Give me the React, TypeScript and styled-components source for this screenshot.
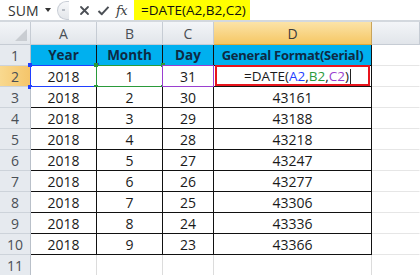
import styled, { createGlobalStyle } from 'styled-components'

const GlobalStyle = createGlobalStyle`
  html, body {
    margin: 0;
    padding: 0;
    background: #ffffff;
    overflow: hidden;
  }
  body {
    font-family: "Open Sans", "Liberation Sans", sans-serif;
  }
`;

type RefColor = 'blue' | 'green' | 'purple' | 'red';

const refColors: Record<RefColor, string> = {
  blue: '#1f3fff',
  green: '#2a9a3a',
  purple: '#9a3fd0',
  red: '#e8141c',
};

const rows = [
  { year: '2018', month: '1', day: '31', serial: '' },
  { year: '2018', month: '2', day: '30', serial: '43161' },
  { year: '2018', month: '3', day: '29', serial: '43188' },
  { year: '2018', month: '4', day: '28', serial: '43218' },
  { year: '2018', month: '5', day: '27', serial: '43247' },
  { year: '2018', month: '6', day: '26', serial: '43277' },
  { year: '2018', month: '7', day: '25', serial: '43306' },
  { year: '2018', month: '8', day: '24', serial: '43336' },
  { year: '2018', month: '9', day: '23', serial: '43366' },
];

const Sheet = styled.div`
  width: 420px;
  height: 275px;
  display: flex;
  flex-direction: column;
  overflow: hidden;
`;

const FormulaBar = styled.div`
  height: 20px;
  display: flex;
  align-items: stretch;
  background: #f3f4f6;
  border-bottom: 2px solid #d3d8de;
`;

const NameBox = styled.div`
  width: 57px;
  display: flex;
  align-items: center;
  justify-content: space-between;
  padding: 0 6px 0 8px;
  box-sizing: border-box;
  background: #ffffff;
  font-size: 14px;
  color: #333;
`;

const Caret = styled.span`
  width: 0;
  height: 0;
  border-left: 3.5px solid transparent;
  border-right: 3.5px solid transparent;
  border-top: 4px solid #333;
`;

const IconPanel = styled.div`
  width: 77px;
  display: flex;
  align-items: center;
  background: #ffffff;
`;

const Grip = styled.div`
  width: 11px;
  height: 17px;
  margin-left: 0;
  border: 1px solid #c9ced6;
  border-right: none;
  border-radius: 10px 0 0 10px;
  background: linear-gradient(#f7f8fa, #e3e6ea);
  display: flex;
  align-items: center;
  justify-content: center;
  &::after {
    content: '';
    width: 3px;
    height: 2px;
    background: #b7bcc4;
  }
`;

const IconSlot = styled.span<{ $left: number }>`
  margin-left: ${(p) => p.$left}px;
  display: flex;
  align-items: center;
  color: #4b4f55;
`;

const Fx = styled.span`
  font-family: "DejaVu Serif", "Liberation Serif", serif;
  font-style: italic;
  font-size: 13px;
  color: #3a3d42;
  letter-spacing: -0.5px;
`;

const FormulaInput = styled.div`
  flex: 1;
  display: flex;
  align-items: center;
  background: #ffffff;
`;

const Highlight = styled.span`
  height: 20px;
  display: flex;
  align-items: center;
  padding: 0 4px 0 7px;
  background: #ffff00;
  font-size: 13.5px;
  color: #111;
`;

const Grid = styled.div`
  display: grid;
  grid-template-columns: 31px 66px 66px 51px 158px 1fr;
  grid-template-rows: 23px repeat(11, 21px);
`;

const Corner = styled.div`
  background: linear-gradient(#f3f5f8, #e3e7ec);
  border-right: 1px solid #c6ccd4;
  border-bottom: 1px solid #c6ccd4;
  position: relative;
  &::after {
    content: '';
    position: absolute;
    right: 3px;
    bottom: 3px;
    width: 0;
    height: 0;
    border-left: 12px solid transparent;
    border-bottom: 12px solid #c9cdd2;
  }
`;

const ColHead = styled.div<{ $active?: boolean }>`
  display: flex;
  align-items: center;
  justify-content: center;
  font-size: 14px;
  color: ${(p) => (p.$active ? '#3b3b3b' : '#4a4f55')};
  background: ${(p) =>
    p.$active ? 'linear-gradient(#fbe3a8, #f6c764)' : 'linear-gradient(#f3f5f8, #e1e5ea)'};
  border-right: 1px solid ${(p) => (p.$active ? '#c9a45a' : '#c6ccd4')};
  border-bottom: 1px solid ${(p) => (p.$active ? '#e0a93c' : '#c6ccd4')};
`;

const RowHead = styled.div<{ $active?: boolean }>`
  display: flex;
  align-items: center;
  justify-content: center;
  font-size: 14px;
  color: #4a4f55;
  background: ${(p) => (p.$active ? 'linear-gradient(90deg, #f9d98f, #f5c56a)' : '#e6eaef')};
  border-right: 1px solid #b9c0c9;
  border-bottom: 1px solid #cdd3da;
`;

const Cell = styled.div<{ $head?: boolean; $tight?: boolean; $empty?: boolean }>`
  position: relative;
  display: flex;
  align-items: center;
  justify-content: center;
  box-sizing: border-box;
  font-size: ${(p) => (p.$tight ? '13px' : p.$head ? '13.5px' : '14px')};
  letter-spacing: ${(p) => (p.$tight ? '-0.25px' : 'normal')};
  font-weight: ${(p) => (p.$head ? 700 : 400)};
  color: ${(p) => (p.$head ? '#0e2a44' : '#1a1a1a')};
  background: ${(p) => (p.$head ? '#00b0ef' : '#ffffff')};
  border-right: 1px solid ${(p) => (p.$empty ? '#dcdcdc' : '#111')};
  border-bottom: 1px solid ${(p) => (p.$empty ? '#dcdcdc' : '#111')};
  white-space: nowrap;
`;

const Blank = styled.div<{ $rightLine?: boolean }>`
  background: #ffffff;
  border-right: 1px solid ${(p) => (p.$rightLine ? '#dcdcdc' : 'transparent')};
  border-bottom: 1px solid #e6e6e6;
`;

const RefFrame = styled.div<{ $color: RefColor; $thick?: boolean }>`
  position: absolute;
  left: ${(p) => (p.$thick ? '1px' : '-1px')};
  top: -1px;
  right: ${(p) => (p.$thick ? '1px' : '-1px')};
  bottom: ${(p) => (p.$thick ? '0' : '-1px')};
  border: ${(p) => (p.$thick ? 2 : 1)}px solid ${(p) => refColors[p.$color]};
  pointer-events: none;
`;

const Handle = styled.span<{ $color: RefColor; $x: 'left' | 'right'; $y: 'top' | 'bottom' }>`
  position: absolute;
  width: 4px;
  height: 4px;
  background: ${(p) => refColors[p.$color]};
  ${(p) => p.$x}: -3px;
  ${(p) => p.$y}: -3px;
`;

const Ref = styled.span<{ $color?: RefColor }>`
  color: ${(p) => (p.$color ? refColors[p.$color] : 'inherit')};
`;

const TextCursor = styled.span`
  display: inline-block;
  width: 1px;
  height: 16px;
  margin-left: 1px;
  background: #222;
  vertical-align: middle;
`;

const Formula = styled.span`
  font-size: 13.5px;
  margin-left: 10px;
`;

const RangeRef = ({ color }: { color: RefColor }) => (
  <RefFrame $color={color}>
    <Handle $color={color} $x="left" $y="top" />
    <Handle $color={color} $x="right" $y="top" />
    <Handle $color={color} $x="left" $y="bottom" />
    <Handle $color={color} $x="right" $y="bottom" />
  </RefFrame>
);

const CrossIcon = () => (
  <svg width="11" height="11" viewBox="0 0 11 11">
    <path d="M2 2 L9 9 M9 2 L2 9" stroke="#4b4f55" strokeWidth="1.8" strokeLinecap="round" />
  </svg>
);

const CheckIcon = () => (
  <svg width="13" height="11" viewBox="0 0 13 11">
    <path d="M1.5 6 L4.8 9.2 L11.5 1.8" stroke="#4b4f55" strokeWidth="2" fill="none" strokeLinejoin="round" />
  </svg>
);

const App = () => {
  return (
    <>
      <GlobalStyle />
      <Sheet>
        <FormulaBar>
          <NameBox>
            SUM
            <Caret />
          </NameBox>
          <IconPanel>
            <Grip />
            <IconSlot $left={10}><CrossIcon /></IconSlot>
            <IconSlot $left={7}><CheckIcon /></IconSlot>
            <IconSlot $left={6}><Fx>fx</Fx></IconSlot>
          </IconPanel>
          <FormulaInput>
            <Highlight>=DATE(A2,B2,C2)</Highlight>
          </FormulaInput>
        </FormulaBar>

        <Grid>
          <Corner />
          <ColHead>A</ColHead>
          <ColHead>B</ColHead>
          <ColHead>C</ColHead>
          <ColHead $active>D</ColHead>
          <ColHead />

          <RowHead>1</RowHead>
          <Cell $head>Year</Cell>
          <Cell $head>Month</Cell>
          <Cell $head>Day</Cell>
          <Cell $head $tight>General Format(Serial)</Cell>
          <Blank />

          {rows.map((r, i) => {
            const n = i + 2;
            const first = i === 0;
            return [
              <RowHead key={`h${n}`} $active={first}>{n}</RowHead>,
              <Cell key={`a${n}`}>
                {r.year}
                {first && <RangeRef color="blue" />}
              </Cell>,
              <Cell key={`b${n}`}>
                {r.month}
                {first && <RangeRef color="green" />}
              </Cell>,
              <Cell key={`c${n}`}>
                {r.day}
                {first && <RefFrame $color="purple" />}
              </Cell>,
              <Cell key={`d${n}`}>
                {first ? (
                  <Formula>
                    =DATE(<Ref $color="blue">A2</Ref>,<Ref $color="green">B2</Ref>,
                    <Ref $color="purple">C2</Ref>)<TextCursor />
                  </Formula>
                ) : (
                  r.serial
                )}
                {first && <RefFrame $color="red" $thick />}
              </Cell>,
              <Blank key={`e${n}`} />,
            ];
          })}

          <RowHead>11</RowHead>
          <Blank $rightLine />
          <Blank $rightLine />
          <Blank $rightLine />
          <Blank $rightLine />
          <Blank />
        </Grid>
      </Sheet>
    </>
  )
}

export default App
